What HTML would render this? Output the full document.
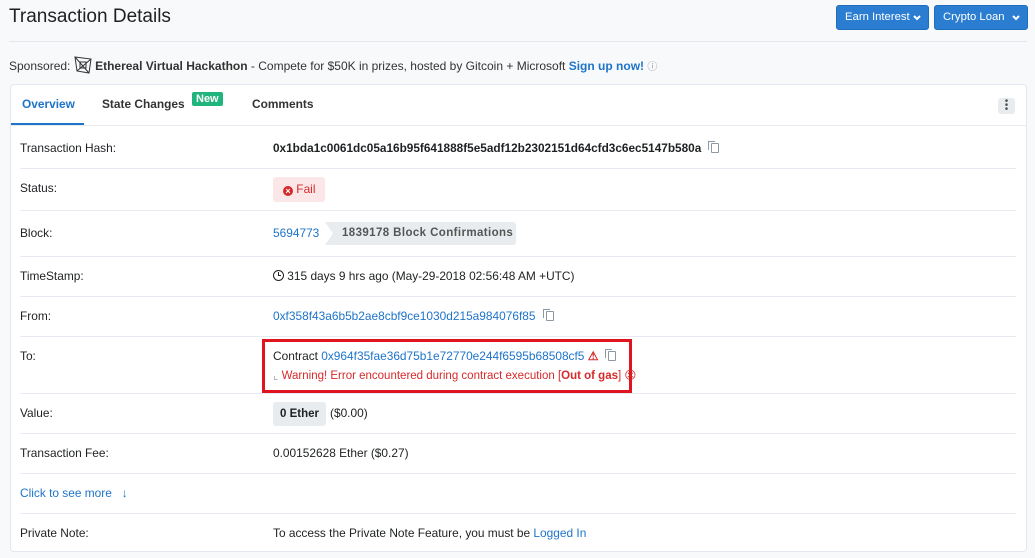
<!DOCTYPE html>
<html><head><meta charset="utf-8"><style>
*{margin:0;padding:0;box-sizing:border-box}
body{width:1035px;height:558px;background:#f8f9fa;font-family:"Liberation Sans",Arial,sans-serif;font-size:11.9px;color:#1e2022;position:relative;overflow:hidden}
.a{position:absolute;white-space:nowrap}
a,.lk{color:#1e74c9;text-decoration:none}
.btn{position:absolute;top:5px;height:25px;background:#2a7dd1;border:1px solid #1f6dbd;border-radius:3px;color:#fff;font-size:11.3px;line-height:23px;padding-left:8px;white-space:nowrap}
.btn svg{position:absolute;right:7px;top:9px}
.card{position:absolute;left:10px;top:84px;width:1017px;height:468px;background:#fff;border:1px solid #e3e7ee;border-radius:4px}
.sep{position:absolute;left:20px;width:996px;height:1px;background:#e7eaf3}
.lbl{position:absolute;left:20px;white-space:nowrap}
.val{position:absolute;left:273px;white-space:nowrap}
.cp{display:inline-block;width:8px;height:10px;border:1.2px solid #8c98a4;border-radius:1px;position:relative;vertical-align:-1px;margin-left:10px}
.cp:before{content:"";position:absolute;left:-4px;top:-3px;width:6px;height:8px;border:1.2px solid #8c98a4;border-right:none;border-bottom:none}
</style></head><body>
<div class="a" style="left:9px;top:6px;font-size:19px;color:#1e2022">Transaction Details</div>
<div class="btn" style="left:836px;width:93px">Earn Interest<svg width="8" height="6" viewBox="0 0 8 6"><path d="M1 1L4 4L7 1" stroke="#fff" stroke-width="2" fill="none"/></svg></div>
<div class="btn" style="left:934px;width:94px">Crypto Loan<svg width="8" height="6" viewBox="0 0 8 6"><path d="M1 1L4 4L7 1" stroke="#fff" stroke-width="2" fill="none"/></svg></div>
<div class="a" style="left:9px;top:41px;width:1018px;height:1px;background:#e3e6ec"></div>
<div class="a" style="left:9px;top:56px;color:#333;font-size:12px">Sponsored: <svg width="18" height="18" viewBox="0 0 18 18" style="vertical-align:-4px"><g fill="none" stroke="#333" stroke-width="1"><path d="M1 1L17 3L15 17L3 15Z"/><path d="M1 1L15 17M17 3L3 15"/><path d="M6 6L12 6L12 12L6 12Z"/></g></svg> <b style="color:#333">Ethereal Virtual Hackathon</b> - Compete for $50K in prizes, hosted by Gitcoin + Microsoft <b class="lk">Sign up now!</b> <span style="color:#999;font-size:10px">&#9432;</span></div>
<div class="card">
<div class="a" style="left:11px;top:12px;color:#1e74c9;font-weight:bold">Overview</div>
<div class="a" style="left:0;top:38px;width:73px;height:2px;background:#1e74c9"></div>
<div class="a" style="left:91px;top:12px;color:#333;font-weight:bold">State Changes</div>
<div class="a" style="left:181px;top:7px;background:#21b57e;color:#fff;font-weight:bold;font-size:11px;padding:1px 4px;border-radius:2px">New</div>
<div class="a" style="left:241px;top:12px;color:#333;font-weight:bold">Comments</div>
<div class="a" style="left:987px;top:13px;width:17px;height:16px;background:#e9ecef;border-radius:3px;color:#555;font-size:10px;line-height:4px;text-align:center;padding-top:2px">&#8226;<br>&#8226;<br>&#8226;</div>
<div class="a" style="left:0;top:40px;width:1015px;height:1px;background:#e7eaf3"></div>
</div>
<div class="sep" style="top:168px"></div><div class="sep" style="top:210px"></div><div class="sep" style="top:256px"></div><div class="sep" style="top:296px"></div><div class="sep" style="top:336px"></div><div class="sep" style="top:393px"></div><div class="sep" style="top:433px"></div><div class="sep" style="top:473px"></div><div class="sep" style="top:513px"></div>
<div class="lbl" style="top:141px">Transaction Hash:</div>
<div class="val" style="top:141px;font-weight:bold;font-size:11.8px">0x1bda1c0061dc05a16b95f641888f5e5adf12b2302151d64cfd3c6ec5147b580a<span class="cp"></span></div>
<div class="lbl" style="top:181px">Status:</div>
<div class="val" style="top:177px;height:25px;width:52px;background:#fbe7e8;border-radius:3px;color:#d62a2a;line-height:25px;padding-left:10px"><span style="display:inline-block;width:10px;height:10px;border-radius:50%;background:#d62a2a;color:#fff;font-size:9px;line-height:10px;text-align:center;font-weight:bold;vertical-align:-1px">&#215;</span> Fail</div>
<div class="lbl" style="top:226px">Block:</div>
<div class="val" style="top:226px"><a>5694773</a></div>
<div class="a" style="left:325px;top:222px;width:191px;height:23px;background:#e9ecef;border-radius:0 3px 3px 0;clip-path:polygon(0 0,100% 0,100% 100%,0 100%,8px 50%);color:#555;font-weight:bold;letter-spacing:0.4px;line-height:23px;padding-left:17px;font-size:11.5px">1839178 Block Confirmations</div>
<div class="lbl" style="top:269px">TimeStamp:</div>
<div class="val" style="top:269px"><span style="display:inline-block;width:11px;height:11px;border:1.3px solid #222;border-radius:50%;vertical-align:-1px;position:relative"><span style="position:absolute;left:3.5px;top:1px;width:3px;height:4px;border-left:1.2px solid #222;border-bottom:1.2px solid #222"></span></span> 315 days 9 hrs ago (May-29-2018 02:56:48 AM +UTC)</div>
<div class="lbl" style="top:309px">From:</div>
<div class="val" style="top:309px"><a>0xf358f43a6b5b2ae8cbf9ce1030d215a984076f85</a><span class="cp"></span></div>
<div class="lbl" style="top:349px">To:</div>
<div class="a" style="left:262px;top:339px;width:370px;height:54px;border:3px solid #e0141e"></div>
<div class="val" style="top:349px">Contract <a>0x964f35fae36d75b1e72770e244f6595b68508cf5</a> <span style="color:#d62a2a;font-weight:bold">&#9888;</span><span class="cp"></span></div>
<div class="val" style="top:368px;color:#d62a2a;font-size:11.5px"><span style="color:#aaa">&#8990;</span> Warning! Error encountered during contract execution [<b>Out of gas</b>] &#9785;</div>
<div class="lbl" style="top:406px">Value:</div>
<div class="val" style="top:402px;height:24px;background:#e9ecef;border-radius:3px;padding:0 7px;line-height:24px;font-weight:bold;font-size:11.5px">0 Ether</div>
<div class="a" style="left:330px;top:406px">($0.00)</div>
<div class="lbl" style="top:446px">Transaction Fee:</div>
<div class="val" style="top:446px">0.00152628 Ether ($0.27)</div>
<div class="lbl lk" style="top:486px">Click to see more &nbsp;&nbsp;<span style="font-weight:bold">&#8595;</span></div>
<div class="lbl" style="top:526px">Private Note:</div>
<div class="val" style="top:526px">To access the Private Note Feature, you must be <a>Logged In</a></div>
</body></html>
